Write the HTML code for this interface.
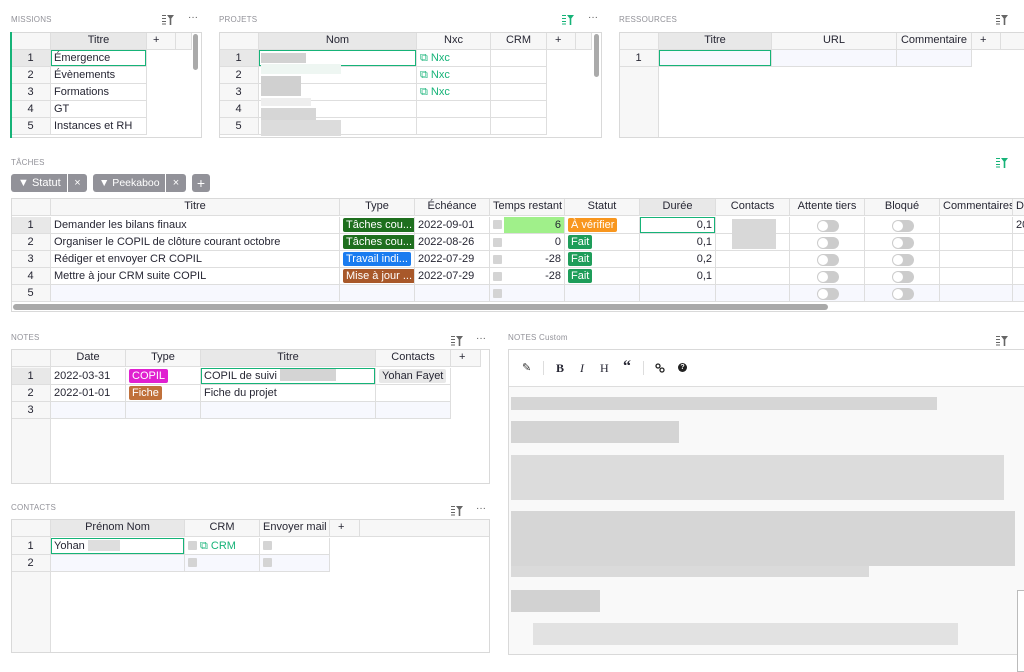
<!DOCTYPE html>
<html><head><meta charset="utf-8"><style>
*{box-sizing:border-box;margin:0;padding:0}
body{width:1024px;height:672px;background:#fff;font-family:"Liberation Sans",sans-serif;font-size:11px;color:#262633;position:relative;overflow:hidden}
.a{position:absolute}
.lbl{position:absolute;font-size:8px;color:#929299;letter-spacing:.2px}
.box{position:absolute;border:1px solid #d9d9d9;background:transparent;z-index:5;pointer-events:none}
.c{position:absolute;border-right:1px solid #dedede;border-bottom:1px solid #dedede;height:17px;line-height:16px;padding:0 3px;white-space:nowrap;overflow:hidden}
.h{background:#f7f7f7;text-align:center;height:18px;line-height:17px}
.hs{background:#e8e8e8}
.rn{background:#f7f7f7;text-align:center}
.rs{background:#e8e8e8}
.nw{background:#f7f8fe}
.sel{box-shadow:inset 0 0 0 1px #16b378}
.g{color:#16b378}
.chip{display:inline-block;color:#fff;border-radius:2px;padding:0 3px;line-height:14px;height:14px;margin-top:1px}
.ico{position:absolute;font-size:10px;color:#555}
.tg{position:absolute;width:22px;height:12px;border-radius:6px;background:#ccc}
.tg:after{content:"";position:absolute;left:1px;top:1px;width:10px;height:10px;border-radius:5px;background:#fff}
.eq{display:inline-block;width:9px;height:9px;background:#d4d4d4;border-radius:1px;vertical-align:-1px;margin-right:3px}
.bl{position:absolute;background:#d6d6d6}
.fi{position:absolute}
</style></head><body>
<svg width="0" height="0" style="position:absolute"><defs><g id="f"><path d="M0 1.5h4M0 4.5h4M0 7.5h4M0 10h4" stroke="currentColor" stroke-width="1"/><path d="M5 1h7L9.3 4.5V11H7.7V4.5z" fill="currentColor"/></g></defs></svg>

<!-- MISSIONS -->
<div class="lbl" style="left:11px;top:15px">MISSIONS</div>
<svg class="fi" style="left:162px;top:14px;color:#666" width="12" height="12"><use href="#f"/></svg><div class="ico" style="left:188px;top:12px">···</div>
<div class="box" style="left:11px;top:32px;width:191px;height:106px"></div>
<div class="a" style="left:10px;top:32px;width:2px;height:106px;background:#16b378;z-index:6"></div>
<div class="c h" style="left:11px;top:32px;width:40px"></div>
<div class="c h hs" style="left:51px;top:32px;width:96px">Titre</div>
<div class="c h" style="left:147px;top:32px;width:29px;text-align:left;padding-left:6px">+</div>
<div class="c h" style="left:176px;top:32px;width:16px"></div>
<div class="c rn rs" style="left:11px;top:50px;width:40px">1</div><div class="c sel" style="left:51px;top:50px;width:96px">Émergence</div>
<div class="c rn" style="left:11px;top:67px;width:40px">2</div><div class="c" style="left:51px;top:67px;width:96px">Évènements</div>
<div class="c rn" style="left:11px;top:84px;width:40px">3</div><div class="c" style="left:51px;top:84px;width:96px">Formations</div>
<div class="c rn" style="left:11px;top:101px;width:40px">4</div><div class="c" style="left:51px;top:101px;width:96px">GT</div>
<div class="c rn" style="left:11px;top:118px;width:40px">5</div><div class="c" style="left:51px;top:118px;width:96px">Instances et RH</div>
<div class="a" style="left:193px;top:34px;width:5px;height:36px;border-radius:3px;background:#aaa"></div>

<!-- PROJETS -->
<div class="lbl" style="left:219px;top:15px">PROJETS</div>
<svg class="fi" style="left:562px;top:14px;color:#16b378" width="12" height="12"><use href="#f"/></svg><div class="ico" style="left:588px;top:12px">···</div>
<div class="box" style="left:219px;top:32px;width:383px;height:106px"></div>
<div class="c h" style="left:219px;top:32px;width:40px"></div>
<div class="c h hs" style="left:259px;top:32px;width:158px">Nom</div>
<div class="c h" style="left:417px;top:32px;width:74px">Nxc</div>
<div class="c h" style="left:491px;top:32px;width:56px">CRM</div>
<div class="c h" style="left:547px;top:32px;width:29px;text-align:left;padding-left:8px">+</div>
<div class="c h" style="left:576px;top:32px;width:16px"></div>
<div class="c rn rs" style="left:219px;top:50px;width:40px">1</div><div class="c sel" style="left:259px;top:50px;width:158px"></div><div class="c g" style="left:417px;top:50px;width:74px">⧉ Nxc</div><div class="c" style="left:491px;top:50px;width:56px"></div>
<div class="c rn" style="left:219px;top:67px;width:40px">2</div><div class="c" style="left:259px;top:67px;width:158px"></div><div class="c g" style="left:417px;top:67px;width:74px">⧉ Nxc</div><div class="c" style="left:491px;top:67px;width:56px"></div>
<div class="c rn" style="left:219px;top:84px;width:40px">3</div><div class="c" style="left:259px;top:84px;width:158px"></div><div class="c g" style="left:417px;top:84px;width:74px">⧉ Nxc</div><div class="c" style="left:491px;top:84px;width:56px"></div>
<div class="c rn" style="left:219px;top:101px;width:40px">4</div><div class="c" style="left:259px;top:101px;width:158px"></div><div class="c" style="left:417px;top:101px;width:74px"></div><div class="c" style="left:491px;top:101px;width:56px"></div>
<div class="c rn" style="left:219px;top:118px;width:40px">5</div><div class="c" style="left:259px;top:118px;width:158px"></div><div class="c" style="left:417px;top:118px;width:74px"></div><div class="c" style="left:491px;top:118px;width:56px"></div>
<div class="bl" style="left:261px;top:53px;width:45px;height:10px;background:#d2d2d2"></div>
<div class="bl" style="left:261px;top:64px;width:80px;height:10px;background:#eef6f2"></div>
<div class="bl" style="left:261px;top:76px;width:40px;height:20px;background:#d0d0d0"></div>
<div class="bl" style="left:261px;top:98px;width:50px;height:8px;background:#eee"></div>
<div class="bl" style="left:261px;top:108px;width:55px;height:12px;background:#d6d6d6"></div>
<div class="bl" style="left:261px;top:120px;width:80px;height:16px;background:#dcdcdc"></div>
<div class="a" style="left:594px;top:34px;width:5px;height:43px;border-radius:3px;background:#aaa"></div>

<!-- RESSOURCES -->
<div class="lbl" style="left:619px;top:15px">RESSOURCES</div>
<svg class="fi" style="left:996px;top:14px;color:#666" width="12" height="12"><use href="#f"/></svg>
<div class="box" style="left:619px;top:32px;width:410px;height:106px"></div>
<div class="a" style="left:619px;top:32px;width:40px;height:106px;background:#f7f7f7;border-right:1px solid #dedede"></div>
<div class="c h" style="left:619px;top:32px;width:40px"></div>
<div class="c h hs" style="left:659px;top:32px;width:113px">Titre</div>
<div class="c h" style="left:772px;top:32px;width:125px">URL</div>
<div class="c h" style="left:897px;top:32px;width:75px">Commentaire</div>
<div class="c h" style="left:972px;top:32px;width:29px;text-align:left;padding-left:8px">+</div>
<div class="c h" style="left:1001px;top:32px;width:30px"></div>
<div class="c rn" style="left:619px;top:50px;width:40px">1</div><div class="c nw sel" style="left:659px;top:50px;width:113px"></div><div class="c nw" style="left:772px;top:50px;width:125px"></div><div class="c nw" style="left:897px;top:50px;width:75px"></div>

<!-- TACHES -->
<div class="lbl" style="left:11px;top:158px">TÂCHES</div>
<svg class="fi" style="left:996px;top:157px;color:#16b378" width="12" height="12"><use href="#f"/></svg>
<div class="a" style="left:11px;top:174px;width:56px;height:18px;background:#929299;border-radius:3px 0 0 3px;color:#fff;line-height:18px;padding-left:7px;white-space:nowrap">▼ Statut</div>
<div class="a" style="left:68px;top:174px;width:19px;height:18px;background:#929299;border-radius:0 3px 3px 0;color:#fff;line-height:18px;text-align:center">×</div>
<div class="a" style="left:93px;top:174px;width:72px;height:18px;background:#929299;border-radius:3px 0 0 3px;color:#fff;line-height:18px;padding-left:6px;white-space:nowrap;font-size:10.5px">▼ Peekaboo</div>
<div class="a" style="left:166px;top:174px;width:20px;height:18px;background:#929299;border-radius:0 3px 3px 0;color:#fff;line-height:18px;text-align:center">×</div>
<div class="a" style="left:192px;top:174px;width:18px;height:18px;background:#929299;border-radius:3px;color:#fff;line-height:18px;text-align:center;font-size:14px">+</div>
<div class="box" style="left:11px;top:198px;width:1020px;height:114px"></div>
<div class="c h" style="left:11px;top:198px;width:40px"></div>
<div class="c h" style="left:51px;top:198px;width:289px">Titre</div>
<div class="c h" style="left:340px;top:198px;width:75px">Type</div>
<div class="c h" style="left:415px;top:198px;width:75px">Échéance</div>
<div class="c h" style="left:490px;top:198px;width:75px">Temps restant</div>
<div class="c h" style="left:565px;top:198px;width:75px">Statut</div>
<div class="c h hs" style="left:640px;top:198px;width:76px">Durée</div>
<div class="c h" style="left:716px;top:198px;width:74px">Contacts</div>
<div class="c h" style="left:790px;top:198px;width:75px">Attente tiers</div>
<div class="c h" style="left:865px;top:198px;width:75px">Bloqué</div>
<div class="c h" style="left:940px;top:198px;width:73px">Commentaires</div>
<div class="c h" style="left:1013px;top:198px;width:20px;text-align:left">D</div>

<div class="c rn rs" style="left:11px;top:217px;width:40px">1</div>
<div class="c" style="left:51px;top:217px;width:289px">Demander les bilans finaux</div>
<div class="c" style="left:340px;top:217px;width:75px"><span class="chip" style="background:#1e6f1e">Tâches cou...</span></div>
<div class="c" style="left:415px;top:217px;width:75px">2022-09-01</div>
<div class="c" style="left:490px;top:217px;width:75px;padding:0"><span class="eq" style="margin:0 3px 0 3px"></span><span class="a" style="left:14px;top:0;width:60px;height:16px;background:#a0f08a;text-align:right;padding-right:3px">6</span></div>
<div class="c" style="left:565px;top:217px;width:75px"><span class="chip" style="background:#f8961e">À vérifier</span></div>
<div class="c sel" style="left:640px;top:217px;width:76px;text-align:right">0,1</div>
<div class="c" style="left:716px;top:217px;width:74px"></div>
<div class="c" style="left:790px;top:217px;width:75px"></div><div class="c" style="left:865px;top:217px;width:75px"></div><div class="c" style="left:940px;top:217px;width:73px"></div><div class="c" style="left:1013px;top:217px;width:20px">20</div>

<div class="c rn" style="left:11px;top:234px;width:40px">2</div>
<div class="c" style="left:51px;top:234px;width:289px">Organiser le COPIL de clôture courant octobre</div>
<div class="c" style="left:340px;top:234px;width:75px"><span class="chip" style="background:#1e6f1e">Tâches cou...</span></div>
<div class="c" style="left:415px;top:234px;width:75px">2022-08-26</div>
<div class="c" style="left:490px;top:234px;width:75px;text-align:right"><span class="eq" style="float:left;margin-top:4px"></span>0</div>
<div class="c" style="left:565px;top:234px;width:75px"><span class="chip" style="background:#1e9d5a">Fait</span></div>
<div class="c" style="left:640px;top:234px;width:76px;text-align:right">0,1</div>
<div class="c" style="left:716px;top:234px;width:74px"></div>
<div class="c" style="left:790px;top:234px;width:75px"></div><div class="c" style="left:865px;top:234px;width:75px"></div><div class="c" style="left:940px;top:234px;width:73px"></div><div class="c" style="left:1013px;top:234px;width:20px"></div>

<div class="c rn" style="left:11px;top:251px;width:40px">3</div>
<div class="c" style="left:51px;top:251px;width:289px">Rédiger et envoyer CR COPIL</div>
<div class="c" style="left:340px;top:251px;width:75px"><span class="chip" style="background:#1a7cf0">Travail indi...</span></div>
<div class="c" style="left:415px;top:251px;width:75px">2022-07-29</div>
<div class="c" style="left:490px;top:251px;width:75px;text-align:right"><span class="eq" style="float:left;margin-top:4px"></span>-28</div>
<div class="c" style="left:565px;top:251px;width:75px"><span class="chip" style="background:#1e9d5a">Fait</span></div>
<div class="c" style="left:640px;top:251px;width:76px;text-align:right">0,2</div>
<div class="c" style="left:716px;top:251px;width:74px"></div>
<div class="c" style="left:790px;top:251px;width:75px"></div><div class="c" style="left:865px;top:251px;width:75px"></div><div class="c" style="left:940px;top:251px;width:73px"></div><div class="c" style="left:1013px;top:251px;width:20px"></div>

<div class="c rn" style="left:11px;top:268px;width:40px">4</div>
<div class="c" style="left:51px;top:268px;width:289px">Mettre à jour CRM suite COPIL</div>
<div class="c" style="left:340px;top:268px;width:75px"><span class="chip" style="background:#a8582a">Mise à jour ...</span></div>
<div class="c" style="left:415px;top:268px;width:75px">2022-07-29</div>
<div class="c" style="left:490px;top:268px;width:75px;text-align:right"><span class="eq" style="float:left;margin-top:4px"></span>-28</div>
<div class="c" style="left:565px;top:268px;width:75px"><span class="chip" style="background:#1e9d5a">Fait</span></div>
<div class="c" style="left:640px;top:268px;width:76px;text-align:right">0,1</div>
<div class="c" style="left:716px;top:268px;width:74px"></div>
<div class="c" style="left:790px;top:268px;width:75px"></div><div class="c" style="left:865px;top:268px;width:75px"></div><div class="c" style="left:940px;top:268px;width:73px"></div><div class="c" style="left:1013px;top:268px;width:20px"></div>

<div class="c rn" style="left:11px;top:285px;width:40px">5</div>
<div class="c nw" style="left:51px;top:285px;width:289px"></div><div class="c nw" style="left:340px;top:285px;width:75px"></div><div class="c nw" style="left:415px;top:285px;width:75px"></div>
<div class="c nw" style="left:490px;top:285px;width:75px"><span class="eq" style="margin-top:4px"></span></div>
<div class="c nw" style="left:565px;top:285px;width:75px"></div><div class="c nw" style="left:640px;top:285px;width:76px"></div><div class="c nw" style="left:716px;top:285px;width:74px"></div><div class="c nw" style="left:790px;top:285px;width:75px"></div><div class="c nw" style="left:865px;top:285px;width:75px"></div><div class="c nw" style="left:940px;top:285px;width:73px"></div><div class="c nw" style="left:1013px;top:285px;width:20px"></div>

<div class="bl" style="left:732px;top:219px;width:44px;height:30px;background:#d8d8d8"></div>
<div class="tg" style="left:817px;top:220px"></div><div class="tg" style="left:892px;top:220px"></div>
<div class="tg" style="left:817px;top:237px"></div><div class="tg" style="left:892px;top:237px"></div>
<div class="tg" style="left:817px;top:254px"></div><div class="tg" style="left:892px;top:254px"></div>
<div class="tg" style="left:817px;top:271px"></div><div class="tg" style="left:892px;top:271px"></div>
<div class="tg" style="left:817px;top:288px"></div><div class="tg" style="left:892px;top:288px"></div>
<div class="a" style="left:13px;top:304px;width:815px;height:6px;border-radius:3px;background:#a9a9a9"></div>

<!-- NOTES -->
<div class="lbl" style="left:11px;top:333px">NOTES</div>
<svg class="fi" style="left:451px;top:335px;color:#666" width="12" height="12"><use href="#f"/></svg><div class="ico" style="left:476px;top:333px">···</div>
<div class="box" style="left:11px;top:349px;width:479px;height:135px"></div>
<div class="a" style="left:11px;top:349px;width:40px;height:135px;background:#f7f7f7;border-right:1px solid #dedede"></div>
<div class="c h" style="left:11px;top:349px;width:40px"></div>
<div class="c h" style="left:51px;top:349px;width:75px">Date</div>
<div class="c h" style="left:126px;top:349px;width:75px">Type</div>
<div class="c h hs" style="left:201px;top:349px;width:175px">Titre</div>
<div class="c h" style="left:376px;top:349px;width:75px">Contacts</div>
<div class="c h" style="left:451px;top:349px;width:30px;text-align:left;padding-left:8px">+</div>
<div class="c rn rs" style="left:11px;top:368px;width:40px">1</div>
<div class="c" style="left:51px;top:368px;width:75px">2022-03-31</div>
<div class="c" style="left:126px;top:368px;width:75px"><span class="chip" style="background:#e020d0">COPIL</span></div>
<div class="c sel" style="left:201px;top:368px;width:175px">COPIL de suivi <span style="display:inline-block;width:56px;height:12px;background:#d4d4d4;vertical-align:-2px"></span></div>
<div class="c" style="left:376px;top:368px;width:75px"><span class="chip" style="background:#e8e8e8;color:#262633">Yohan Fayet</span></div>
<div class="c rn" style="left:11px;top:385px;width:40px">2</div>
<div class="c" style="left:51px;top:385px;width:75px">2022-01-01</div>
<div class="c" style="left:126px;top:385px;width:75px"><span class="chip" style="background:#c0703a">Fiche</span></div>
<div class="c" style="left:201px;top:385px;width:175px">Fiche du projet</div>
<div class="c" style="left:376px;top:385px;width:75px"></div>
<div class="c rn" style="left:11px;top:402px;width:40px">3</div>
<div class="c nw" style="left:51px;top:402px;width:75px"></div><div class="c nw" style="left:126px;top:402px;width:75px"></div><div class="c nw" style="left:201px;top:402px;width:175px"></div><div class="c nw" style="left:376px;top:402px;width:75px"></div>

<!-- CONTACTS -->
<div class="lbl" style="left:11px;top:503px">CONTACTS</div>
<svg class="fi" style="left:451px;top:505px;color:#666" width="12" height="12"><use href="#f"/></svg><div class="ico" style="left:476px;top:503px">···</div>
<div class="box" style="left:11px;top:519px;width:479px;height:134px"></div>
<div class="a" style="left:11px;top:519px;width:40px;height:134px;background:#f7f7f7;border-right:1px solid #dedede"></div>
<div class="c h" style="left:11px;top:519px;width:40px"></div>
<div class="c h hs" style="left:51px;top:519px;width:134px">Prénom Nom</div>
<div class="c h" style="left:185px;top:519px;width:75px">CRM</div>
<div class="c h" style="left:260px;top:519px;width:70px">Envoyer mail</div>
<div class="c h" style="left:330px;top:519px;width:30px;text-align:left;padding-left:8px">+</div>
<div class="c h" style="left:360px;top:519px;width:130px"></div>
<div class="c rn" style="left:11px;top:538px;width:40px">1</div>
<div class="c sel" style="left:51px;top:538px;width:134px">Yohan <span style="display:inline-block;width:32px;height:11px;background:#dedede;vertical-align:-2px"></span></div>
<div class="c g" style="left:185px;top:538px;width:75px"><span class="eq"></span>⧉ CRM</div>
<div class="c" style="left:260px;top:538px;width:70px"><span class="eq"></span></div>
<div class="c rn" style="left:11px;top:555px;width:40px">2</div>
<div class="c nw" style="left:51px;top:555px;width:134px"></div>
<div class="c nw" style="left:185px;top:555px;width:75px"><span class="eq"></span></div>
<div class="c nw" style="left:260px;top:555px;width:70px"><span class="eq"></span></div>

<!-- NOTES Custom -->
<div class="lbl" style="left:508px;top:333px;font-size:8px">NOTES Custom</div>
<svg class="fi" style="left:996px;top:335px;color:#666" width="12" height="12"><use href="#f"/></svg>
<div class="a" style="left:508px;top:349px;width:520px;height:306px;background:#f9f9f9"></div>
<div class="box" style="left:508px;top:349px;width:520px;height:306px"></div>
<div class="a" style="left:509px;top:350px;width:516px;height:37px;background:#fff;border-bottom:1px solid #ddd"></div>
<div class="a" style="left:522px;top:361px;font-size:11px;color:#333">✎</div>
<div class="a" style="left:543px;top:361px;width:1px;height:14px;background:#ddd"></div>
<div class="a" style="left:556px;top:361px;font-family:'Liberation Serif',serif;font-size:12px;font-weight:bold">B</div>
<div class="a" style="left:580px;top:361px;font-family:'Liberation Serif',serif;font-size:12px;font-style:italic">I</div>
<div class="a" style="left:600px;top:361px;font-family:'Liberation Serif',serif;font-size:12px">H</div>
<div class="a" style="left:623px;top:358px;font-family:'Liberation Serif',serif;font-size:16px;font-weight:bold">“</div>
<div class="a" style="left:643px;top:361px;width:1px;height:14px;background:#ddd"></div>
<svg class="a" style="left:655px;top:363px" width="10" height="10"><circle cx="3" cy="3" r="2" fill="none" stroke="#222" stroke-width="1.3"/><circle cx="7" cy="7" r="2" fill="none" stroke="#222" stroke-width="1.3"/></svg>
<div class="a" style="left:678px;top:363px;width:9px;height:9px;border-radius:5px;background:#222;color:#fff;font-size:7px;text-align:center;line-height:9px;font-weight:bold">?</div>
<div class="bl" style="left:511px;top:397px;width:426px;height:13px;background:#d6d6d6"></div>
<div class="bl" style="left:511px;top:421px;width:168px;height:22px;background:#d4d4d4"></div>
<div class="bl" style="left:511px;top:455px;width:493px;height:45px;background:#dcdcdc"></div>
<div class="bl" style="left:511px;top:511px;width:504px;height:55px;background:#d6d6d6"></div>
<div class="bl" style="left:511px;top:566px;width:358px;height:11px;background:#dadada"></div>
<div class="bl" style="left:511px;top:590px;width:89px;height:22px;background:#d2d2d2"></div>
<div class="bl" style="left:533px;top:623px;width:425px;height:22px;background:#e2e2e2"></div>
<div class="a" style="left:1017px;top:590px;width:10px;height:82px;border:1px solid #bbb;background:#fff;z-index:6"></div>
</body></html>
